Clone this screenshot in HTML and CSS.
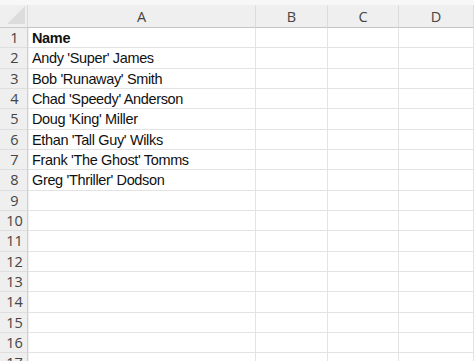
FILE: index.html
```html
<!DOCTYPE html>
<html>
<head>
<meta charset="utf-8">
<link rel="stylesheet" href="styles.css">
</head>
<body>
<div class="sheet">
  <div class="topstrip"></div>
  <div class="grid">
    <div class="corner"><span class="tri"></span></div>
    <div class="colhead">A</div>
    <div class="colhead">B</div>
    <div class="colhead">C</div>
    <div class="colhead last">D</div>

    <div class="rowhead">1</div><div class="cell bold">Name</div><div class="cell"></div><div class="cell"></div><div class="cell last"></div>
    <div class="rowhead">2</div><div class="cell">Andy 'Super' James</div><div class="cell"></div><div class="cell"></div><div class="cell last"></div>
    <div class="rowhead">3</div><div class="cell">Bob 'Runaway' Smith</div><div class="cell"></div><div class="cell"></div><div class="cell last"></div>
    <div class="rowhead">4</div><div class="cell">Chad 'Speedy' Anderson</div><div class="cell"></div><div class="cell"></div><div class="cell last"></div>
    <div class="rowhead">5</div><div class="cell">Doug 'King' Miller</div><div class="cell"></div><div class="cell"></div><div class="cell last"></div>
    <div class="rowhead">6</div><div class="cell">Ethan 'Tall Guy' Wilks</div><div class="cell"></div><div class="cell"></div><div class="cell last"></div>
    <div class="rowhead">7</div><div class="cell">Frank 'The Ghost' Tomms</div><div class="cell"></div><div class="cell"></div><div class="cell last"></div>
    <div class="rowhead">8</div><div class="cell">Greg 'Thriller' Dodson</div><div class="cell"></div><div class="cell"></div><div class="cell last"></div>
    <div class="rowhead">9</div><div class="cell"></div><div class="cell"></div><div class="cell"></div><div class="cell last"></div>
    <div class="rowhead">10</div><div class="cell"></div><div class="cell"></div><div class="cell"></div><div class="cell last"></div>
    <div class="rowhead">11</div><div class="cell"></div><div class="cell"></div><div class="cell"></div><div class="cell last"></div>
    <div class="rowhead">12</div><div class="cell"></div><div class="cell"></div><div class="cell"></div><div class="cell last"></div>
    <div class="rowhead">13</div><div class="cell"></div><div class="cell"></div><div class="cell"></div><div class="cell last"></div>
    <div class="rowhead">14</div><div class="cell"></div><div class="cell"></div><div class="cell"></div><div class="cell last"></div>
    <div class="rowhead">15</div><div class="cell"></div><div class="cell"></div><div class="cell"></div><div class="cell last"></div>
    <div class="rowhead">16</div><div class="cell"></div><div class="cell"></div><div class="cell"></div><div class="cell last"></div>
    <div class="rowhead">17</div><div class="cell"></div><div class="cell"></div><div class="cell"></div><div class="cell last"></div>
  </div>
</div>
</body>
</html>
```
FILE: styles.css
```css
html, body {
  margin: 0;
  padding: 0;
  background: #ffffff;
  overflow: hidden;
}
.sheet {
  width: 474px;
  height: 361px;
  overflow: hidden;
  font-family: "Liberation Sans", Arial, sans-serif;
  font-size: 14.5px;
  letter-spacing: -0.35px;
  color: #111;
}
.topstrip {
  height: 5px;
  background: #f7f7f7;
}
.grid {
  display: grid;
  grid-template-columns: 28px 228px 72px 71px 75px;
  grid-template-rows: 23px;
  grid-auto-rows: 20.33px;
}
.corner {
  position: relative;
  background: #efefef;
  border-right: 1px solid #dadada;
  border-bottom: 1px solid #c8c8c8;
  box-sizing: border-box;
}
.tri {
  position: absolute;
  right: 2px;
  bottom: 3px;
  width: 0;
  height: 0;
  border-left: 18px solid transparent;
  border-bottom: 18px solid #dcdcdc;
}
.colhead {
  background: #efefef;
  border-right: 1px solid #dcdcdc;
  border-bottom: 1px solid #c6c6c6;
  box-sizing: border-box;
  display: flex;
  align-items: center;
  justify-content: center;
  color: #444;
  font-family: "Open Sans", "Liberation Sans", sans-serif;
  font-size: 14.5px;
  letter-spacing: 0;
  padding-top: 1px;
}
.rowhead {
  background: #efefef;
  border-right: 1px solid #cfcfcf;
  border-bottom: 1px solid #e0e0e0;
  box-shadow: 1px 0 1px rgba(0,0,0,0.06);
  box-sizing: border-box;
  display: flex;
  align-items: center;
  justify-content: center;
  color: #444;
  font-family: "Open Sans", "Liberation Sans", sans-serif;
  font-size: 14.5px;
  letter-spacing: 0;
  padding-left: 2px;
}
.cell {
  border-right: 1px solid #e3e3e3;
  border-bottom: 1px solid #e3e3e3;
  box-sizing: border-box;
  display: flex;
  align-items: center;
  padding-left: 4px;
  padding-top: 1px;
  white-space: nowrap;
  overflow: hidden;
}
.cell.bold {
  font-weight: bold;
}
```
